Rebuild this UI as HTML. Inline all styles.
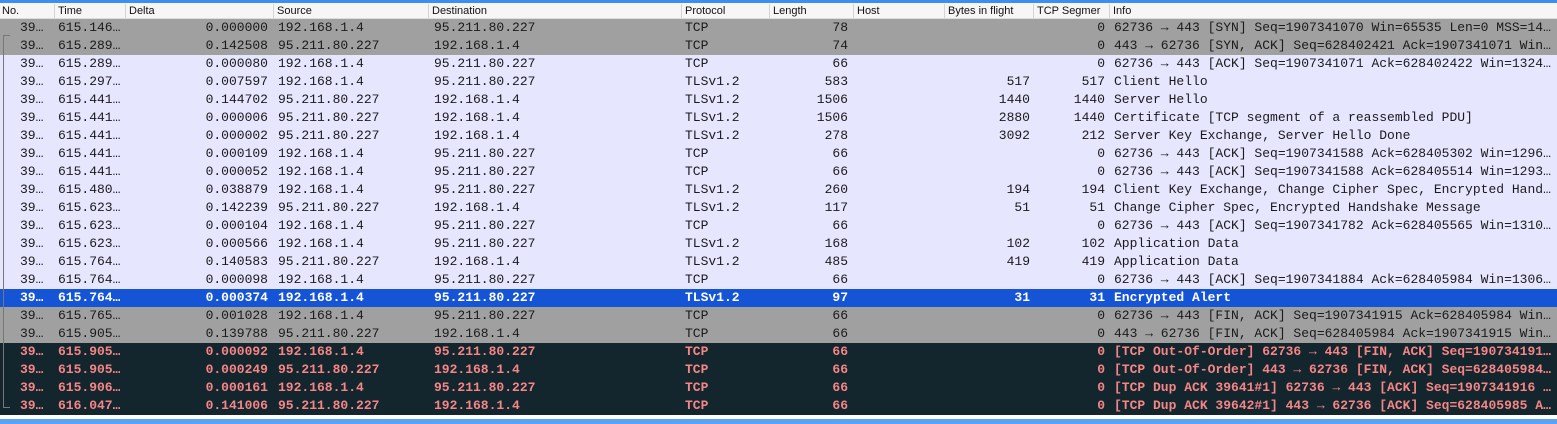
<!DOCTYPE html>
<html><head><meta charset="utf-8"><style>
*{margin:0;padding:0;box-sizing:border-box}
body{width:1557px;height:424px;overflow:hidden;background:#fff;position:relative;font-family:"Liberation Mono","DejaVu Sans Mono",monospace;font-size:13px}
.top{position:absolute;left:0;top:0;width:1557px;height:3px;background:#3d8ef0}
.hdr{position:absolute;left:0;top:3px;width:1557px;height:16px;background:#f6f6f6;border-bottom:1px solid #ddd;font-family:"Liberation Sans",sans-serif;font-size:11px;color:#111}
.hdr span{position:absolute;top:1px;border-left:1px solid #d4d4d4;padding-left:3px;height:14px;line-height:14px}
.r{position:absolute;left:0;width:1557px;height:18px;line-height:18px;color:#1a1a1a;white-space:nowrap}
.r span{position:absolute;top:0;overflow:hidden}
.g{background:#a0a0a0}.l{background:#e7e6ff}
.s{background:#1554d4;color:#fff;font-weight:bold}
.d{background:#13262e;color:#f78585;font-weight:bold}
.a{left:20px}.b{left:58px}.c{left:129px;width:139px;text-align:right}.e{left:278px}.f{left:434px}.p{left:685px}
.n{left:772px;width:76px;text-align:right}.y{left:948px;width:82px;text-align:right}.z{left:1037px;width:68px;text-align:right}.i{left:1114px;width:443px}
.tree{position:absolute;left:3px;top:36px;width:1px;height:372px;background:#777}
.tree2{position:absolute;left:3px;top:407px;width:7px;height:1px;background:#777}
.tree3{position:absolute;left:3px;top:35px;width:7px;height:1px;background:#777}
.bot{position:absolute;left:0;top:419px;width:1557px;height:5px;background:#5aa2f5}
</style></head><body>
<div class="top"></div>
<div class="hdr">
<span style="left:-1px;border:none">No.</span><span style="left:54px">Time</span><span style="left:125px">Delta</span><span style="left:273px">Source</span><span style="left:428px">Destination</span><span style="left:681px">Protocol</span><span style="left:769px">Length</span><span style="left:853px">Host</span><span style="left:944px">Bytes in flight</span><span style="left:1033px">TCP Segmer</span><span style="left:1109px">Info</span>
</div>

<div class="r g" style="top:19px"><span class="a">39…</span><span class="b">615.146…</span><span class="c">0.000000</span><span class="e">192.168.1.4</span><span class="f">95.211.80.227</span><span class="p">TCP</span><span class="n">78</span><span class="y"></span><span class="z">0</span><span class="i">62736 → 443 [SYN] Seq=1907341070 Win=65535 Len=0 MSS=14…</span></div>
<div class="r g" style="top:37px"><span class="a">39…</span><span class="b">615.289…</span><span class="c">0.142508</span><span class="e">95.211.80.227</span><span class="f">192.168.1.4</span><span class="p">TCP</span><span class="n">74</span><span class="z">0</span><span class="i">443 → 62736 [SYN, ACK] Seq=628402421 Ack=1907341071 Win…</span></div>
<div class="r l" style="top:55px"><span class="a">39…</span><span class="b">615.289…</span><span class="c">0.000080</span><span class="e">192.168.1.4</span><span class="f">95.211.80.227</span><span class="p">TCP</span><span class="n">66</span><span class="z">0</span><span class="i">62736 → 443 [ACK] Seq=1907341071 Ack=628402422 Win=1324…</span></div>
<div class="r l" style="top:73px"><span class="a">39…</span><span class="b">615.297…</span><span class="c">0.007597</span><span class="e">192.168.1.4</span><span class="f">95.211.80.227</span><span class="p">TLSv1.2</span><span class="n">583</span><span class="y">517</span><span class="z">517</span><span class="i">Client Hello</span></div>
<div class="r l" style="top:91px"><span class="a">39…</span><span class="b">615.441…</span><span class="c">0.144702</span><span class="e">95.211.80.227</span><span class="f">192.168.1.4</span><span class="p">TLSv1.2</span><span class="n">1506</span><span class="y">1440</span><span class="z">1440</span><span class="i">Server Hello</span></div>
<div class="r l" style="top:109px"><span class="a">39…</span><span class="b">615.441…</span><span class="c">0.000006</span><span class="e">95.211.80.227</span><span class="f">192.168.1.4</span><span class="p">TLSv1.2</span><span class="n">1506</span><span class="y">2880</span><span class="z">1440</span><span class="i">Certificate [TCP segment of a reassembled PDU]</span></div>
<div class="r l" style="top:127px"><span class="a">39…</span><span class="b">615.441…</span><span class="c">0.000002</span><span class="e">95.211.80.227</span><span class="f">192.168.1.4</span><span class="p">TLSv1.2</span><span class="n">278</span><span class="y">3092</span><span class="z">212</span><span class="i">Server Key Exchange, Server Hello Done</span></div>
<div class="r l" style="top:145px"><span class="a">39…</span><span class="b">615.441…</span><span class="c">0.000109</span><span class="e">192.168.1.4</span><span class="f">95.211.80.227</span><span class="p">TCP</span><span class="n">66</span><span class="z">0</span><span class="i">62736 → 443 [ACK] Seq=1907341588 Ack=628405302 Win=1296…</span></div>
<div class="r l" style="top:163px"><span class="a">39…</span><span class="b">615.441…</span><span class="c">0.000052</span><span class="e">192.168.1.4</span><span class="f">95.211.80.227</span><span class="p">TCP</span><span class="n">66</span><span class="z">0</span><span class="i">62736 → 443 [ACK] Seq=1907341588 Ack=628405514 Win=1293…</span></div>
<div class="r l" style="top:181px"><span class="a">39…</span><span class="b">615.480…</span><span class="c">0.038879</span><span class="e">192.168.1.4</span><span class="f">95.211.80.227</span><span class="p">TLSv1.2</span><span class="n">260</span><span class="y">194</span><span class="z">194</span><span class="i">Client Key Exchange, Change Cipher Spec, Encrypted Hand…</span></div>
<div class="r l" style="top:199px"><span class="a">39…</span><span class="b">615.623…</span><span class="c">0.142239</span><span class="e">95.211.80.227</span><span class="f">192.168.1.4</span><span class="p">TLSv1.2</span><span class="n">117</span><span class="y">51</span><span class="z">51</span><span class="i">Change Cipher Spec, Encrypted Handshake Message</span></div>
<div class="r l" style="top:217px"><span class="a">39…</span><span class="b">615.623…</span><span class="c">0.000104</span><span class="e">192.168.1.4</span><span class="f">95.211.80.227</span><span class="p">TCP</span><span class="n">66</span><span class="z">0</span><span class="i">62736 → 443 [ACK] Seq=1907341782 Ack=628405565 Win=1310…</span></div>
<div class="r l" style="top:235px"><span class="a">39…</span><span class="b">615.623…</span><span class="c">0.000566</span><span class="e">192.168.1.4</span><span class="f">95.211.80.227</span><span class="p">TLSv1.2</span><span class="n">168</span><span class="y">102</span><span class="z">102</span><span class="i">Application Data</span></div>
<div class="r l" style="top:253px"><span class="a">39…</span><span class="b">615.764…</span><span class="c">0.140583</span><span class="e">95.211.80.227</span><span class="f">192.168.1.4</span><span class="p">TLSv1.2</span><span class="n">485</span><span class="y">419</span><span class="z">419</span><span class="i">Application Data</span></div>
<div class="r l" style="top:271px"><span class="a">39…</span><span class="b">615.764…</span><span class="c">0.000098</span><span class="e">192.168.1.4</span><span class="f">95.211.80.227</span><span class="p">TCP</span><span class="n">66</span><span class="z">0</span><span class="i">62736 → 443 [ACK] Seq=1907341884 Ack=628405984 Win=1306…</span></div>
<div class="r s" style="top:289px"><span class="a">39…</span><span class="b">615.764…</span><span class="c">0.000374</span><span class="e">192.168.1.4</span><span class="f">95.211.80.227</span><span class="p">TLSv1.2</span><span class="n">97</span><span class="y">31</span><span class="z">31</span><span class="i">Encrypted Alert</span></div>
<div class="r g" style="top:307px"><span class="a">39…</span><span class="b">615.765…</span><span class="c">0.001028</span><span class="e">192.168.1.4</span><span class="f">95.211.80.227</span><span class="p">TCP</span><span class="n">66</span><span class="z">0</span><span class="i">62736 → 443 [FIN, ACK] Seq=1907341915 Ack=628405984 Win…</span></div>
<div class="r g" style="top:325px"><span class="a">39…</span><span class="b">615.905…</span><span class="c">0.139788</span><span class="e">95.211.80.227</span><span class="f">192.168.1.4</span><span class="p">TCP</span><span class="n">66</span><span class="z">0</span><span class="i">443 → 62736 [FIN, ACK] Seq=628405984 Ack=1907341915 Win…</span></div>
<div class="r d" style="top:343px"><span class="a">39…</span><span class="b">615.905…</span><span class="c">0.000092</span><span class="e">192.168.1.4</span><span class="f">95.211.80.227</span><span class="p">TCP</span><span class="n">66</span><span class="z">0</span><span class="i">[TCP Out-Of-Order] 62736 → 443 [FIN, ACK] Seq=190734191…</span></div>
<div class="r d" style="top:361px"><span class="a">39…</span><span class="b">615.905…</span><span class="c">0.000249</span><span class="e">95.211.80.227</span><span class="f">192.168.1.4</span><span class="p">TCP</span><span class="n">66</span><span class="z">0</span><span class="i">[TCP Out-Of-Order] 443 → 62736 [FIN, ACK] Seq=628405984…</span></div>
<div class="r d" style="top:379px"><span class="a">39…</span><span class="b">615.906…</span><span class="c">0.000161</span><span class="e">192.168.1.4</span><span class="f">95.211.80.227</span><span class="p">TCP</span><span class="n">66</span><span class="z">0</span><span class="i">[TCP Dup ACK 39641#1] 62736 → 443 [ACK] Seq=1907341916 …</span></div>
<div class="r d" style="top:397px"><span class="a">39…</span><span class="b">616.047…</span><span class="c">0.141006</span><span class="e">95.211.80.227</span><span class="f">192.168.1.4</span><span class="p">TCP</span><span class="n">66</span><span class="z">0</span><span class="i">[TCP Dup ACK 39642#1] 443 → 62736 [ACK] Seq=628405985 A…</span></div>
<div class="tree"></div><div class="tree2"></div><div class="tree3"></div>
<div class="bot"></div>
</body></html>
